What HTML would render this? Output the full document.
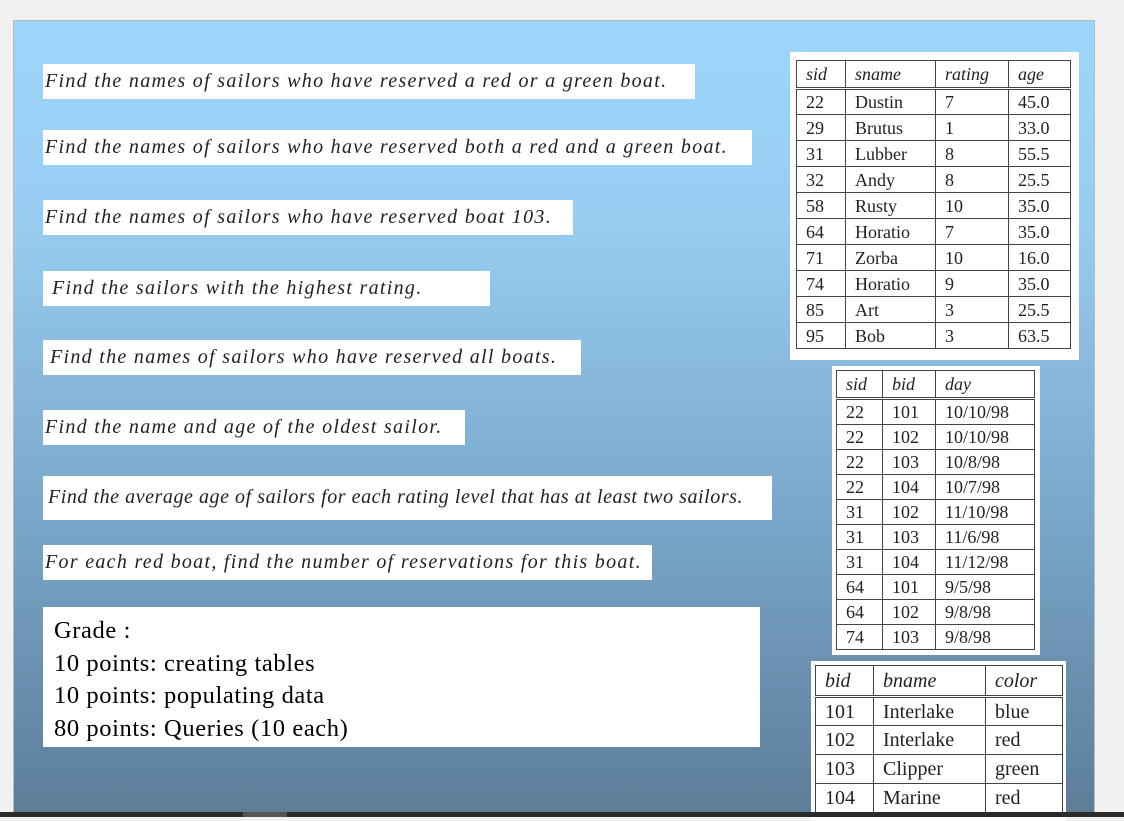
<!DOCTYPE html>
<html><head><style>
*{margin:0;padding:0;box-sizing:border-box}
body{width:1124px;height:817px;background:#f1f1f1;position:relative;overflow:hidden;font-family:"Liberation Serif",serif}
#slide{position:absolute;left:13px;top:20px;width:1082px;height:797px;background:linear-gradient(#9dd6fc 0%,#98cdf2 25%,#7ba9cc 60%,#5c7d98 100%);border:1px solid #bbb}
.q{position:absolute;background:#fff;font-style:italic;font-size:20px;color:#222;white-space:nowrap;line-height:35px;padding-left:2px;letter-spacing:1.3px}
.grade{position:absolute;left:43px;top:607px;width:717px;height:140px;background:#fff;font-size:24.5px;line-height:32.5px;padding:8px 0 0 11px;color:#000;letter-spacing:0.6px}
.tw{position:absolute;background:#fff}
table{position:absolute;border-collapse:collapse;font-size:18px;color:#222}
td{border:1px solid #444;padding:0 0 0 9px;height:26px;line-height:24px}
tr.h td{font-style:italic;height:28px;border-bottom:3px double #444}
#t2 td{height:25px}
#t2 tr.h td{height:28px}
#bar{position:absolute;left:0;top:812px;width:1124px;height:5px;background:#2b2b2b}
#bar div{position:absolute;left:243px;width:44px;height:5px;background:#555}
</style></head><body>
<div id="slide"></div>
<div class="q" style="left:43px;top:64px;width:652px">Find the names of sailors who have reserved a red or a green boat.</div>
<div class="q" style="left:43px;top:130px;width:709px">Find the names of sailors who have reserved both a red and a green boat.</div>
<div class="q" style="left:43px;top:200px;width:530px">Find the names of sailors who have reserved boat 103.</div>
<div class="q" style="left:43px;top:271px;width:447px;padding-left:9px">Find the sailors with the highest rating.</div>
<div class="q" style="left:43px;top:340px;width:538px;padding-left:7px">Find the names of sailors who have reserved all boats.</div>
<div class="q" style="left:43px;top:410px;width:422px">Find the name and age of the oldest sailor.</div>
<div class="q" style="left:43px;top:476px;width:729px;height:44px;line-height:42px;padding-left:5px;letter-spacing:0.55px">Find the average age of sailors for each rating level that has at least two sailors.</div>
<div class="q" style="left:43px;top:545px;width:609px">For each red boat, find the number of reservations for this boat.</div>
<div class="grade">Grade :<br>10 points: creating tables<br>10 points: populating data<br>80 points: Queries (10 each)</div>

<div class="tw" style="left:790px;top:52px;width:289px;height:308px"></div>
<table style="left:796px;top:60px;width:275px">
<tr class="h"><td style="width:49px">sid</td><td style="width:90px">sname</td><td style="width:73px">rating</td><td>age</td></tr>
<tr><td>22</td><td>Dustin</td><td>7</td><td>45.0</td></tr>
<tr><td>29</td><td>Brutus</td><td>1</td><td>33.0</td></tr>
<tr><td>31</td><td>Lubber</td><td>8</td><td>55.5</td></tr>
<tr><td>32</td><td>Andy</td><td>8</td><td>25.5</td></tr>
<tr><td>58</td><td>Rusty</td><td>10</td><td>35.0</td></tr>
<tr><td>64</td><td>Horatio</td><td>7</td><td>35.0</td></tr>
<tr><td>71</td><td>Zorba</td><td>10</td><td>16.0</td></tr>
<tr><td>74</td><td>Horatio</td><td>9</td><td>35.0</td></tr>
<tr><td>85</td><td>Art</td><td>3</td><td>25.5</td></tr>
<tr><td>95</td><td>Bob</td><td>3</td><td>63.5</td></tr>
</table>

<div class="tw" style="left:832px;top:366px;width:208px;height:289px"></div>
<table id="t2" style="left:836px;top:370px;width:199px">
<tr class="h"><td style="width:46px">sid</td><td style="width:53px">bid</td><td>day</td></tr>
<tr><td>22</td><td>101</td><td>10/10/98</td></tr>
<tr><td>22</td><td>102</td><td>10/10/98</td></tr>
<tr><td>22</td><td>103</td><td>10/8/98</td></tr>
<tr><td>22</td><td>104</td><td>10/7/98</td></tr>
<tr><td>31</td><td>102</td><td>11/10/98</td></tr>
<tr><td>31</td><td>103</td><td>11/6/98</td></tr>
<tr><td>31</td><td>104</td><td>11/12/98</td></tr>
<tr><td>64</td><td>101</td><td>9/5/98</td></tr>
<tr><td>64</td><td>102</td><td>9/8/98</td></tr>
<tr><td>74</td><td>103</td><td>9/8/98</td></tr>
</table>

<div class="tw" style="left:811px;top:661px;width:255px;height:160px"></div>
<table style="left:815px;top:665px;width:248px;font-size:20px">
<tr class="h"><td style="width:58px;height:31px">bid</td><td style="width:112px">bname</td><td>color</td></tr>
<tr><td style="height:29px">101</td><td>Interlake</td><td>blue</td></tr>
<tr><td style="height:29px">102</td><td>Interlake</td><td>red</td></tr>
<tr><td style="height:29px">103</td><td>Clipper</td><td>green</td></tr>
<tr><td style="height:29px">104</td><td>Marine</td><td>red</td></tr>
</table>
<div id="bar"><div></div></div>
</body></html>
